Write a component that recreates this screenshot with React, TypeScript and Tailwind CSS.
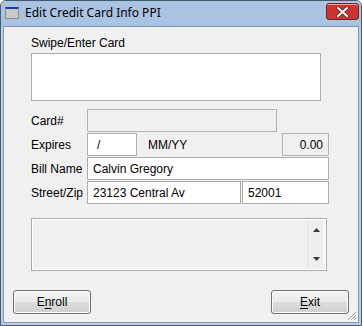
import React from "react";

const font = { fontFamily: '"Liberation Sans", Arial, sans-serif' };

function Field({
  w,
  value,
  disabled,
  right,
  pad = "pl-[5px]",
}: {
  w: string;
  value?: string;
  disabled?: boolean;
  right?: boolean;
  pad?: string;
}) {
  return (
    <div
      className={`${w} h-[23px] flex items-center border text-[12px] text-black ${pad} ${
        disabled
          ? "bg-[#f0f0f0] border-[#b4b4b4]"
          : "bg-white border-[#adadad]"
      } ${right ? "justify-end pr-[5px]" : ""}`}
    >
      {value}
    </div>
  );
}

function Btn({ children }: { children: React.ReactNode }) {
  return (
    <button className="w-[78px] h-[24px] rounded-[3px] border border-[#707070] bg-[linear-gradient(to_bottom,#f2f2f2_0%,#ebebeb_48%,#dddddd_52%,#cfcfcf_100%)] shadow-[inset_0_0_0_1px_#fbfbfb] text-[12px] text-black flex items-center justify-center">
      {children}
    </button>
  );
}

function CloseBox() {
  return (
    <div className="ml-auto mr-[2px] mt-[-4px] w-[33px] h-[17px] rounded-[3px] border border-[#6e2a1e] bg-red-700 shadow-[inset_0_0_0_20px_rgba(230,150,130,0.35),inset_0_1px_0_#f0b0a0] flex items-center justify-center">
      <svg width="13" height="10" viewBox="0 0 13 10">
        <path
          d="M2 1 L11 9 M11 1 L2 9"
          stroke="#5a2a22"
          strokeWidth="3.6"
          strokeLinecap="square"
        />
        <path
          d="M2 1 L11 9 M11 1 L2 9"
          stroke="#ffffff"
          strokeWidth="2"
          strokeLinecap="square"
        />
      </svg>
    </div>
  );
}

export default function App() {
  return (
    <div
      style={font}
      className="w-[362px] h-[326px] border border-[#4a5a6e] rounded-t-[6px] flex flex-col bg-[#b9cfe9] overflow-hidden"
    >
      {/* title bar */}
      <div className="h-[25px] flex items-center bg-[#aac3e2]">
        <div className="ml-[4px] w-[14px] h-[12px] mt-[-1px] border border-[#8c8c8c] border-t-2 border-t-[#1a3fa8] bg-[#c8c8c8]" />
        <span
          className="ml-[6px] text-[12px] text-black mt-[-1px]"
          style={{ fontFamily: '"Noto Sans", "Liberation Sans", sans-serif' }}
        >
          Edit Credit Card Info PPI
        </span>
        <CloseBox />
      </div>

      {/* client */}
      <div className="flex-1 mx-[2px] mb-[2px] border border-[#7f97b4] bg-[#f0f0f0] flex flex-col relative">
        <div className="ml-[27px] pt-[9px] flex flex-col">
          <div className="h-[14px] leading-[14px] text-[12px] text-black">
            Swipe/Enter Card
          </div>
          <div className="mt-[3px] w-[290px] h-[48px] bg-white border border-[#adadad]" />

          <div className="mt-[8px] w-[298px] flex flex-col gap-px text-[12px] text-black">
            <div className="flex items-center h-[23px]">
              <span className="w-[56px]">Card#</span>
              <Field w="w-[190px]" disabled />
            </div>
            <div className="flex items-center h-[23px]">
              <span className="w-[56px]">Expires</span>
              <Field w="w-[50px]" value="/" pad="pl-[9px]" />
              <span className="ml-[11px]">MM/YY</span>
              <div className="ml-auto">
                <Field w="w-[47px]" value="0.00" disabled right />
              </div>
            </div>
            <div className="flex items-center h-[23px]">
              <span className="w-[56px]">Bill Name</span>
              <Field w="w-[242px]" value="Calvin Gregory" />
            </div>
            <div className="flex items-center h-[23px]">
              <span className="w-[56px]">Street/Zip</span>
              <Field w="w-[154px]" value="23123 Central Av" />
              <div className="ml-px">
                <Field w="w-[87px]" value="52001" />
              </div>
            </div>
          </div>

          {/* memo */}
          <div className="mt-[14px] w-[296px] h-[53px] border border-[#a9a9a9] shadow-[inset_0_0_0_1px_#ffffff] bg-[#f0f0f0] flex justify-end p-[2px]">
            <div className="w-[17px] h-full bg-[#eeeeee] border-l border-[#e4e4e4] shadow-[inset_-1px_0_0_#fafafa] flex flex-col items-center justify-between py-[7px]">
              <svg width="7" height="4" viewBox="0 0 7 4">
                <path d="M3.5 0 L7 4 L0 4 Z" fill="#3a3a3a" />
              </svg>
              <svg width="7" height="4" viewBox="0 0 7 4">
                <path d="M0 0 L7 0 L3.5 4 Z" fill="#3a3a3a" />
              </svg>
            </div>
          </div>
        </div>

        <div className="mt-[19px] px-[9px] flex justify-between">
          <Btn>
            E<span className="underline underline-offset-2">n</span>roll
          </Btn>
          <Btn>
            <span className="underline underline-offset-2">E</span>xit
          </Btn>
        </div>

        {/* size grip */}
        <svg
          className="absolute right-[1px] bottom-[1px]"
          width="11"
          height="11"
          viewBox="0 0 11 11"
        >
          <path
            d="M10 2 L2 10 M10 5 L5 10 M10 8 L8 10"
            stroke="#a0a0a0"
            strokeWidth="1"
          />
          <path
            d="M11 3 L3 11 M11 6 L6 11 M11 9 L9 11"
            stroke="#ffffff"
            strokeWidth="1"
          />
        </svg>
      </div>
    </div>
  );
}
